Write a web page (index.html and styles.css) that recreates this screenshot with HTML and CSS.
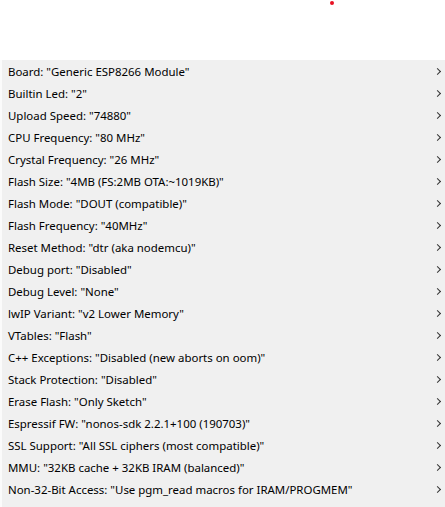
FILE: index.html
```html
<!DOCTYPE html>
<html>
<head>
<meta charset="utf-8">
<link rel="stylesheet" href="styles.css">
</head>
<body>
<div class="top"><span class="dot"></span></div>
<ul class="menu">
<li><span>Board: "Generic ESP8266 Module"</span><i class="chev"></i></li>
<li><span>Builtin Led: "2"</span><i class="chev"></i></li>
<li><span>Upload Speed: "74880"</span><i class="chev"></i></li>
<li><span>CPU Frequency: "80 MHz"</span><i class="chev"></i></li>
<li><span>Crystal Frequency: "26 MHz"</span><i class="chev"></i></li>
<li><span>Flash Size: "4MB (FS:2MB OTA:~1019KB)"</span><i class="chev"></i></li>
<li><span>Flash Mode: "DOUT (compatible)"</span><i class="chev"></i></li>
<li><span>Flash Frequency: "40MHz"</span><i class="chev"></i></li>
<li><span>Reset Method: "dtr (aka nodemcu)"</span><i class="chev"></i></li>
<li><span>Debug port: "Disabled"</span><i class="chev"></i></li>
<li><span>Debug Level: "None"</span><i class="chev"></i></li>
<li><span>lwIP Variant: "v2 Lower Memory"</span><i class="chev"></i></li>
<li><span>VTables: "Flash"</span><i class="chev"></i></li>
<li><span>C++ Exceptions: "Disabled (new aborts on oom)"</span><i class="chev"></i></li>
<li><span>Stack Protection: "Disabled"</span><i class="chev"></i></li>
<li><span>Erase Flash: "Only Sketch"</span><i class="chev"></i></li>
<li><span>Espressif FW: "nonos-sdk 2.2.1+100 (190703)"</span><i class="chev"></i></li>
<li><span>SSL Support: "All SSL ciphers (most compatible)"</span><i class="chev"></i></li>
<li><span>MMU: "32KB cache + 32KB IRAM (balanced)"</span><i class="chev"></i></li>
<li><span>Non-32-Bit Access: "Use pgm_read macros for IRAM/PROGMEM"</span><i class="chev"></i></li>
<li><span>Ports</span><i class="chev"></i></li>
</ul>
</body>
</html>
```
FILE: styles.css
```css
html, body {
  margin: 0;
  padding: 0;
  background: #ffffff;
  overflow: hidden;
  height: 507px;
}
.top {
  height: 60px;
  position: relative;
}
.dot {
  position: absolute;
  left: 330px;
  top: 1px;
  width: 4px;
  height: 4px;
  border-radius: 50%;
  background: #e81123;
}
.menu {
  list-style: none;
  margin: 0;
  padding: 0;
  background: #f0f0f0;
  border-left: 2px solid #fbfbfb;
  font-family: "Noto Sans", sans-serif;
  font-size: 11.45px;
  color: #000;
}
.menu li {
  height: 22px;
  display: flex;
  align-items: center;
  justify-content: space-between;
  padding-left: 6px;
  padding-right: 5px;
}
.chev {
  width: 4px;
  height: 4px;
  border-right: 1.5px solid #333;
  border-bottom: 1.5px solid #333;
  transform: rotate(-45deg);
}
```
